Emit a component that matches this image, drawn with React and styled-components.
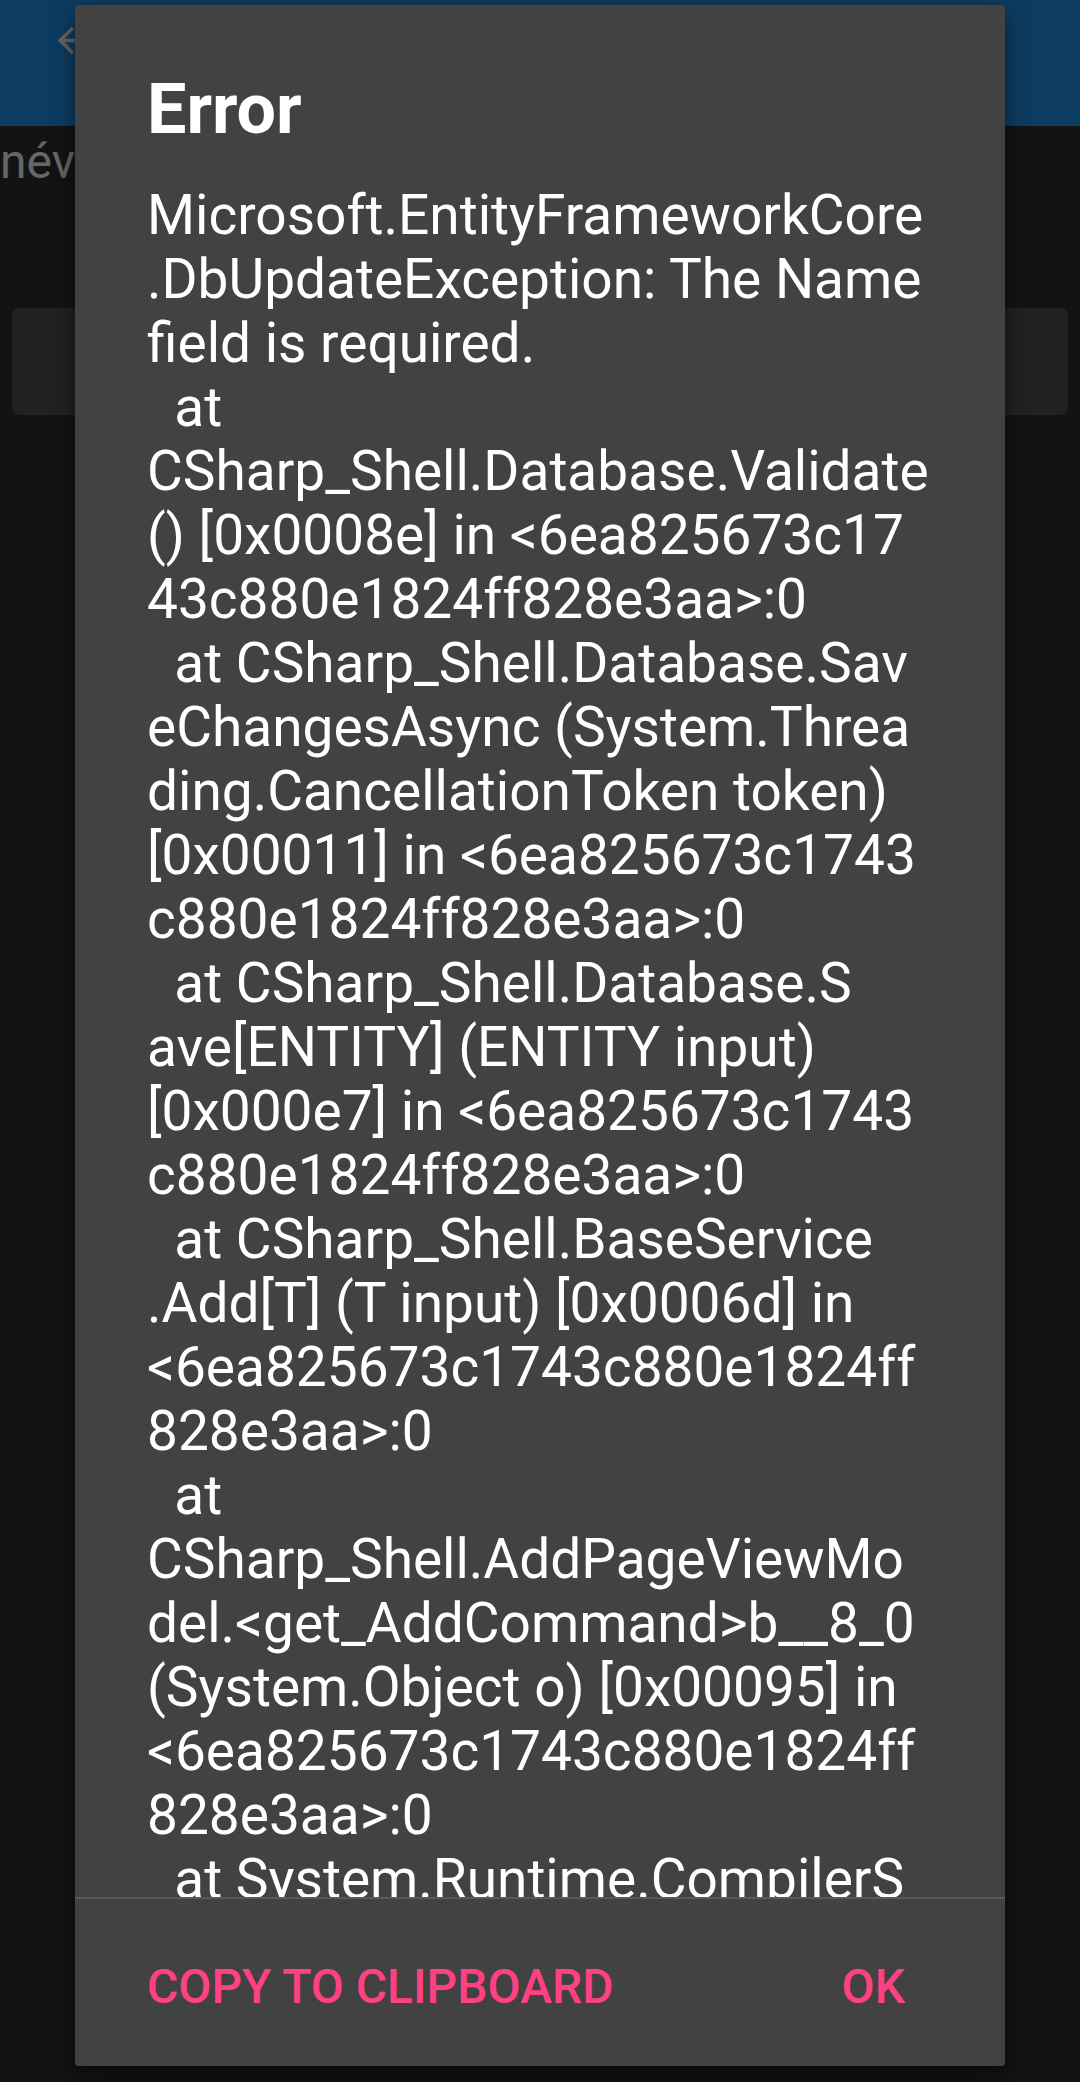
import React from 'react'
import styled, { createGlobalStyle } from 'styled-components'

const GlobalStyle = createGlobalStyle`
    html, body {
        margin: 0;
        padding: 0;
        background: #303030;
        overflow: hidden;
    }

    #root {
        width: 1080px;
        height: 2082px;
    }
`;

const Screen = styled.div`
    position: relative;
    width: 1080px;
    height: 2082px;
    background: #303030;
    font-family: Roboto, 'Noto Sans', sans-serif;
    overflow: hidden;
`;

const AppBar = styled.header`
    height: 126px;
    background: #2196f3;
    display: flex;
    align-items: flex-start;
    padding: 20px 0 0 51px;
    box-sizing: border-box;
`;

const BackIcon = styled.svg`
    width: 41px;
    height: 41px;
    fill: #ffffff;
`;

const Content = styled.main`
    display: flex;
    flex-direction: column;
`;

const Label = styled.div`
    font-size: 48px;
    line-height: 56px;
    color: #ffffff;
    padding-top: 8px;
`;

const InputBox = styled.div`
    margin: 118px 12px 0;
    height: 107px;
    border-radius: 8px;
    background: #555555;
`;

const Scrim = styled.div`
    position: absolute;
    inset: 0;
    background: rgba(0, 0, 0, 0.6);
`;

const Dialog = styled.section`
    position: absolute;
    top: 5px;
    left: 75px;
    width: 930px;
    height: 2061px;
    background: #424242;
    border-radius: 4px;
    box-shadow: 0 8px 24px rgba(0, 0, 0, 0.5);
    display: flex;
    flex-direction: column;
    overflow: hidden;
`;

const Title = styled.h2`
    margin: 0;
    padding: 63px 72px 0;
    font-size: 70px;
    line-height: 82px;
    font-weight: 700;
    color: #ffffff;
`;

const Message = styled.div`
    flex: 1;
    min-height: 0;
    overflow: hidden;
    margin-top: 33px;
    padding: 0 72px;
    color: #ffffff;
    font-size: 55px;
    line-height: 64px;
`;

const Line = styled.div`
    white-space: pre;
`;

const Divider = styled.hr`
    margin: 0;
    border: 0;
    height: 2px;
    background: #595959;
`;

const ButtonBar = styled.footer`
    height: 167px;
    box-sizing: border-box;
    display: flex;
    justify-content: space-between;
    align-items: center;
    padding: 8px 100px 0 72px;
`;

const TextButton = styled.button`
    background: none;
    border: 0;
    padding: 0;
    font-family: Roboto, 'Noto Sans', sans-serif;
    font-size: 48px;
    line-height: 48px;
    font-weight: 500;
    text-transform: uppercase;
    color: #ff4081;
    cursor: pointer;
`;

// stack trace, already broken the way the dialog wraps it
const lines = [
    'Microsoft.EntityFrameworkCore',
    '.DbUpdateException: The Name',
    'field is required.',
    '  at',
    'CSharp_Shell.Database.Validate',
    '() [0x0008e] in <6ea825673c17',
    '43c880e1824ff828e3aa>:0',
    '  at CSharp_Shell.Database.Sav',
    'eChangesAsync (System.Threa',
    'ding.CancellationToken token)',
    '[0x00011] in <6ea825673c1743',
    'c880e1824ff828e3aa>:0',
    '  at CSharp_Shell.Database.S',
    'ave[ENTITY] (ENTITY input)',
    '[0x000e7] in <6ea825673c1743',
    'c880e1824ff828e3aa>:0',
    '  at CSharp_Shell.BaseService',
    '.Add[T] (T input) [0x0006d] in',
    '<6ea825673c1743c880e1824ff',
    '828e3aa>:0',
    '  at',
    'CSharp_Shell.AddPageViewMo',
    'del.<get_AddCommand>b__8_0',
    '(System.Object o) [0x00095] in',
    '<6ea825673c1743c880e1824ff',
    '828e3aa>:0',
    '  at System.Runtime.CompilerS',
];

const App = () => {
    return (
        <Screen>
            <GlobalStyle />
            <AppBar>
                <BackIcon viewBox="0 0 24 24">
                    <path d="M20 11H7.83l5.59-5.59L12 4l-8 8 8 8 1.41-1.41L7.83 13H20v-2z" />
                </BackIcon>
            </AppBar>
            <Content>
                <Label>név</Label>
                <InputBox />
            </Content>
            <Scrim />
            <Dialog>
                <Title>Error</Title>
                <Message>
                    {lines.map((text, i) => <Line key={i}>{text}</Line>)}
                </Message>
                <Divider />
                <ButtonBar>
                    <TextButton>Copy to clipboard</TextButton>
                    <TextButton>OK</TextButton>
                </ButtonBar>
            </Dialog>
        </Screen>
    )
}

export default App
